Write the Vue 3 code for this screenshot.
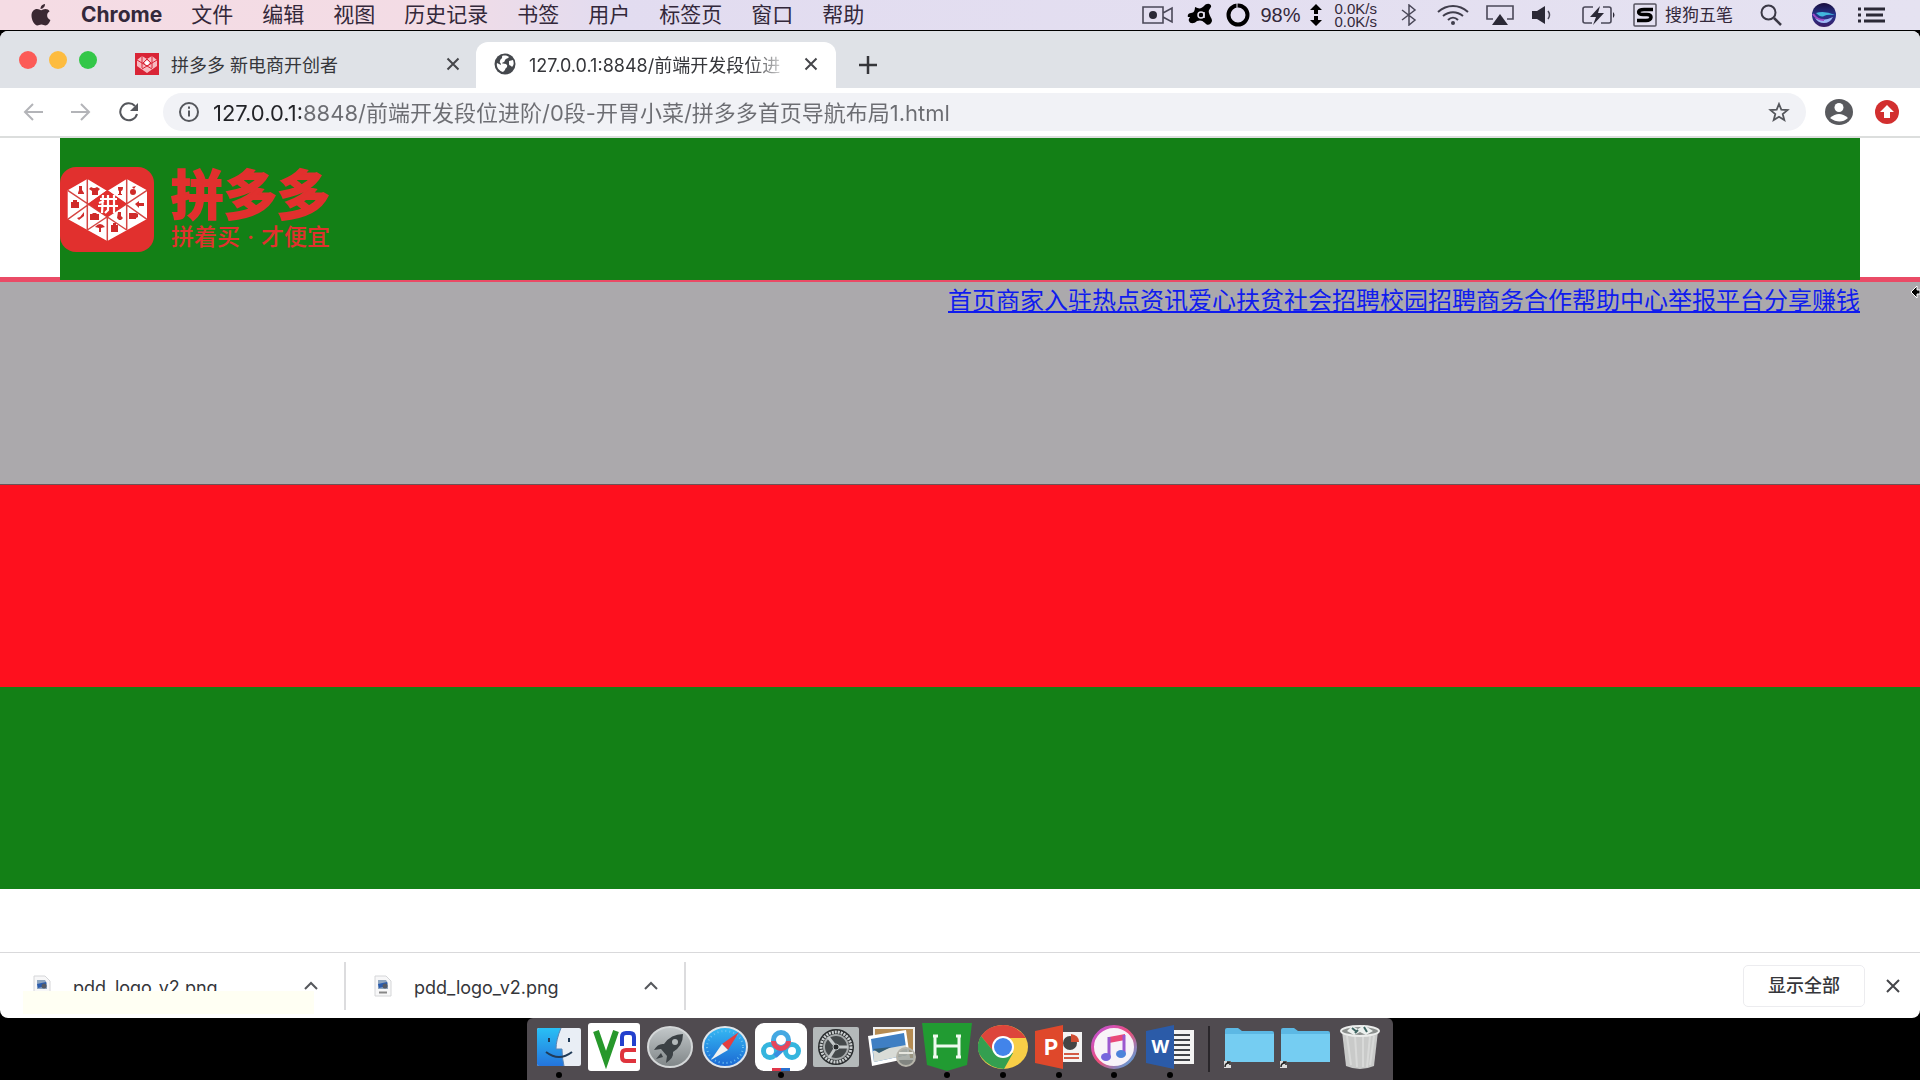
<script setup>
import { ref } from 'vue'

const menus = ['文件', '编辑', '视图', '历史记录', '书签', '用户', '标签页', '窗口', '帮助']
const links = ['首页', '商家入驻', '热点资讯', '爱心扶贫', '社会招聘', '校园招聘', '商务合作', '帮助中心', '举报平台', '分享赚钱']
const downloads = [
  { id: 1, name: 'pdd_logo_v2.png', fading: true },
  { id: 2, name: 'pdd_logo_v2.png', fading: false }
]
const url = ref('127.0.0.1:8848/前端开发段位进阶/0段-开胃小菜/拼多多首页导航布局1.html')
</script>

<template>
  <div class="desktop">
    <header class="menubar">
      <nav class="menus">
        <button class="apple" aria-label="Apple">
          <svg width="22" height="24" viewBox="0 0 22 24"><path d="M15 1c.2 2.5-2 5-4.4 4.9C10.3 3.5 12.5 1.2 15 1zM11.200 7.200c1 0 2.300-1.200 4.300-1.200 1.600 0 3.200.9 4.100 2.300-3.700 2.200-3 7.300.8 8.700-.9 2.700-2.900 5.500-4.900 5.500-1.600 0-2.200-1-4.100-1s-2.600 1-4 1C4.500 22.500 1.500 17 1.500 12.800 1.500 8.500 4.200 6.100 7 6.100c1.800 0 3.200 1.100 4.200 1.100z" /></svg>
        </button>
        <button class="app-name">Chrome</button>
        <button v-for="menu in menus" :key="menu">{{ menu }}</button>
      </nav>
      <div class="status">
        <svg class="camera" width="32" height="20" viewBox="0 0 32 20" fill="none" stroke="#4a4858" stroke-width="1.6"><path d="M1 2h20v16H1zM21 8l9-5v14l-9-5" /><circle cx="11" cy="10" r="4" fill="#2b2936" stroke="none" /></svg>
        <svg class="avast" width="26" height="24" viewBox="0 0 26 24"><path d="M8 4c4 2 6 2 9-1 3-4 8-2 7 1-1 2-3 3-2 6 1 4 3 5 3 8-1 4-5 5-7 2-3-3-5-3-8-2-3 3-7 3-8 0-1-2 1-3 1-4H1c-1-2 1-4 3-4 3 0 4-3 4-6z" /><circle cx="14" cy="12" r="3" fill="none" stroke="#e5e1ef" stroke-width="1.5" /><path d="M17 9v6" stroke="#e5e1ef" stroke-width="1.5" /></svg>
        <svg class="ring" width="24" height="24" viewBox="0 0 24 24"><circle cx="12" cy="12" r="9.5" fill="none" stroke="#000" stroke-width="4" /><path d="M11 0v5" stroke="#e5e1ef" /></svg>
        <span class="percent">98%</span>
        <svg class="updown" width="12" height="24" viewBox="0 0 12 24"><path d="M6 1l6 6H8v4H4V7H0zM6 23l6-6H8v-4H4v4H0z" /></svg>
        <span class="speed"><span>0.0K/s</span><span>0.0K/s</span></span>
        <svg class="bluetooth" width="16" height="22" viewBox="0 0 16 22" fill="none" stroke="#4a4858" stroke-width="1.5"><path d="M1 6l13 10-6 5V1l6 5L1 16" /></svg>
        <svg class="wifi" width="32" height="22" viewBox="0 0 32 22" fill="none" stroke="#3f3d4b" stroke-width="2"><path d="M1 8c9-8 21-8 30 0M6 12c6-5 14-5 20 0M11 16c3-3 7-3 10 0" /><circle cx="16" cy="19" r="2" fill="#3f3d4b" stroke="none" /></svg>
        <svg class="airplay" width="30" height="22" viewBox="0 0 30 22"><path d="M8 15H2V2h26v13h-6" fill="none" stroke="#4a4858" stroke-width="1.6" /><path d="M15 10l8 11H7z" fill="#2b2936" /></svg>
        <svg class="volume" width="22" height="20" viewBox="0 0 22 20"><path d="M1 6h5l8-5v18l-8-5H1z" fill="#2b2936" /><path d="M17 6q3 4 0 8" fill="none" stroke="#4a4858" stroke-width="1.5" /></svg>
        <svg class="battery" width="36" height="20" viewBox="0 0 36 20"><path d="M12 2H4Q2 2 2 4v12q0 2 2 2h7M22 2h6q2 0 2 2v12q0 2-2 2h-8" fill="none" stroke="#4a4858" stroke-width="1.6" /><path d="M19 1L9 12h6l-3 8 11-12h-6zM32 7q3 3 0 6z" fill="#2b2936" /></svg>
        <svg class="sogou" width="24" height="24" viewBox="0 0 24 24"><rect x="1" y="1" width="22" height="22" rx="1" fill="none" stroke="#55535f" stroke-width="1.5" /><path d="M20 6.500h-9c-7 0-7 5-1 5h4c6 0 5 6-1 6H4" fill="none" stroke="#000" stroke-width="3.500" /></svg>
        <span class="ime">搜狗五笔</span>
        <svg class="search" width="22" height="22" viewBox="0 0 22 22" fill="none" stroke="#3a3845" stroke-width="2"><circle cx="8.5" cy="8.5" r="7" /><path d="M14 14l7 7" stroke-width="2.5" /></svg>
        <svg class="siri" width="24" height="24" viewBox="0 0 24 24"><defs><linearGradient id="siri" x2="0" y2="1"><stop stop-color="#190d3d" /><stop offset=".5" stop-color="#26358f" /><stop offset="1" stop-color="#3a1c65" /></linearGradient></defs><circle cx="12" cy="12" r="12" fill="url(#siri)" /><path d="M4 10q8-3 19 2-8-1-11 1t-8-3z" fill="#42b6dd" /><path d="M3 15q8 4 18-1-3 6-9 6t-9-5z" fill="#9eb8f5" /><path d="M1 11q4 6 11 6" fill="none" stroke="#a04bc8" stroke-width="2" /></svg>
        <svg class="list" width="28" height="16" viewBox="0 0 28 16" stroke="#2b2936" stroke-width="3"><path d="M0 2h3M6 2h21M0 8h3M8 8h17M0 14h3M6 14h21" /></svg>
      </div>
    </header>

    <main class="window">
      <div class="tabstrip">
        <div class="lights"><i class="red"></i><i class="yellow"></i><i class="green"></i></div>
        <div class="tab">
          <svg width="24" height="22" viewBox="0 0 24 22"><path d="M0 0h24v22H0z" fill="#d92436" /><path d="M7 3l5 3 5-3 5 4v6l-10 7L2 13V7z" fill="#f7b9c0" /><path d="M2 7l15 9M22 7L7 16M7 3v12M17 3v12M8 10l4-4 4 4-4 3z" stroke="#d92436" fill="none" /><circle cx="12" cy="10" r="2" fill="#fff" /></svg>
          <span class="title">拼多多 新电商开创者</span>
          <button class="close" aria-label="关闭"><svg width="14" height="14" viewBox="0 0 14 14"><path d="M1.500 1.500l11 11M12.500 1.500l-11 11" /></svg></button>
        </div>
        <div class="tab active">
          <svg width="22" height="22" viewBox="0 0 22 22"><circle cx="11" cy="11" r="10.5" fill="#45484d" /><path d="M8 3c3-1 6 0 7 1-1 2-3 1-4 3 0 2-2 2-3 3 0 1 4 0 5 2 1 3-2 3-2 5l-2 2c-4-1-7-5-6-9l4 2c0-3-2-2-1-4 0-2 3-2 2-5zM15 8l4-1c1 3 1 5-1 7-1-2-3-1-3-3z" fill="#fff" /></svg>
          <span class="title">127.0.0.1:8848/前端开发段位进</span>
          <button class="close" aria-label="关闭"><svg width="14" height="14" viewBox="0 0 14 14"><path d="M1.500 1.500l11 11M12.500 1.500l-11 11" /></svg></button>
        </div>
        <button class="new-tab" aria-label="新标签页"><svg width="18" height="18" viewBox="0 0 18 18"><path d="M9 0v18M0 9h18" stroke="#35363a" stroke-width="2.5" /></svg></button>
      </div>

      <div class="toolbar">
        <button class="tool" aria-label="后退"><svg width="20" height="18" viewBox="0 0 20 18" stroke="#b3b4b8"><path d="M20 9H2M10 1L2 9l8 8" /></svg></button>
        <button class="tool" aria-label="前进"><svg width="20" height="18" viewBox="0 0 20 18" stroke="#b3b4b8"><path d="M0 9h18M10 1l8 8-8 8" /></svg></button>
        <button class="tool" aria-label="刷新"><svg width="22" height="20" viewBox="0 0 22 20" stroke="#55575c"><path d="M17 4a8.500 8.500 0 1 0 2 8" /><path d="M20 1v8h-8z" fill="#55575c" stroke="none" /></svg></button>
        <div class="omnibox">
          <svg width="22" height="22" viewBox="0 0 22 22"><circle cx="11" cy="11" r="9" fill="none" stroke="#55575c" stroke-width="2" /><path d="M11 9.500v6M11 5.500v2.200" stroke="#55575c" stroke-width="2" /></svg>
          <input v-model="url" type="text" aria-label="地址" spellcheck="false" />
          <button aria-label="收藏"><svg width="22" height="20" viewBox="0 0 22 20"><path d="M11 2l2.300 5.700 6.200.4-4.800 3.900 1.600 6-5.300-3.300L5.700 18l1.600-6-4.800-3.900 6.200-.4z" fill="none" stroke="#55575c" stroke-width="1.8" /></svg></button>
        </div>
        <button class="avatar" aria-label="用户"><svg width="28" height="26" viewBox="0 0 28 26"><ellipse cx="14" cy="13" rx="14" ry="13" fill="#595a5e" /><circle cx="14" cy="8.5" r="4.5" fill="#fff" /><path d="M5 19q9-8 18 0-8 7-18 0z" fill="#fff" /></svg></button>
        <button class="update" aria-label="更新"><svg width="24" height="24" viewBox="0 0 24 24"><circle cx="12" cy="12" r="12" fill="#d22f2f" /><path d="M12 5l7 7h-4v6H9v-6H5z" fill="#fff" /></svg></button>
      </div>

      <section class="page">
        <div class="site-header">
          <div class="container">
            <svg class="logo" width="94" height="85" viewBox="0 0 94 85">
              <rect width="94" height="85" rx="16" fill="#e1302e" />
              <path d="M27.300 12L47.300 24 66.700 12 87 23.300V52L47.300 74 7.700 52V23.300z" fill="#fff" />
              <path d="M27.300 12v51M66.700 12v51M47.300 50v24M7.700 23.300l59 39.700M7.700 52.300L47.300 24M87 23.300L27.300 63M87 52.300L47.300 24" stroke="#d54643" stroke-width="1.5" />
              <path d="M47.300 23L67 36.700 47.300 50 28 36.700z" fill="#e1302e" />
              <path d="M40 32h17M38 39h20M43 28l-1 18M48 28v15l-3 3M54 28v18M39 36l5-2" stroke="#fff" stroke-width="2.2" fill="none" />
              <g fill="#cf2b2a">
                <path d="M19 19h3v4l2 3v1h-6v-1l1-3zM31 20l2 1h2l2-1 3 2-2 2v4h-6v-4l-3-2zM58 20h5q0 4-2 4v3h1v1h-4v-1h1v-3q-1 0-1-4z" />
                <circle cx="73" cy="25" r="3" /><path d="M72 20l4-1-2 3z" />
                <path d="M11 35h2v-2h4v2h2v6h-8zM75 37l4-3v2h5v3h-5v2zM17 51l3-1 4-5v4l-5 4zM30 47h2l1-1h3l1 1h2v6h-9zM58 45h3v4l2 2-2 2h-2l-2-2zM69 46h7l2 1v3l-2 1v1h-7zM35 60q5-6 10 0l-4 1v4h-2v-4zM51 58h2v-2h3v2h2v7h-7z" />
              </g>
            </svg>
            <div class="brand">
              <strong>拼多多</strong>
              <p><span>拼着买</span><span>·</span><span>才便宜</span></p>
            </div>
          </div>
        </div>
        <div class="band gray">
          <nav class="links"><a v-for="link in links" :key="link" href="#">{{ link }}</a></nav>
        </div>
        <div class="band crimson"></div>
        <div class="band leaf"></div>
        <svg class="cursor" width="10" height="16" viewBox="0 0 10 16"><path d="M1 8l6-6v4h3v4H7v4z" stroke="#fff" /></svg>
      </section>

      <footer class="shelf">
        <div v-for="file in downloads" :key="file.id" class="download" :class="{ fading: file.fading }">
          <svg width="18" height="22" viewBox="0 0 18 22"><path d="M1 1h11l5 5v15H1z" fill="#f7f7f8" stroke="#d5d6d8" /><path d="M4 5h8l2 3v6H4z" fill="#8ea5bf" /><path d="M4 9l9-2v4l-8 2z" fill="#2a5cae" /><circle cx="11" cy="11" r="2.5" fill="#555b66" /><path d="M5 17.500h8" stroke="#888" stroke-width="2" /></svg>
          <span>{{ file.name }}</span>
          <button aria-label="选项"><svg width="14" height="10" viewBox="0 0 14 10"><path d="M1 8l6-6 6 6" fill="none" stroke="#55575c" stroke-width="2" /></svg></button>
        </div>
        <button class="show-all">显示全部</button>
        <button class="close" aria-label="关闭"><svg width="14" height="14" viewBox="0 0 14 14"><path d="M1 1l12 12M13 1L1 13" /></svg></button>
      </footer>
    </main>

    <div class="dock">
      <div class="app running">
        <svg width="44" height="48" viewBox="0 0 44 48"><defs><linearGradient id="finder" x2="0" y2="1"><stop stop-color="#29c0f5" /><stop offset="1" stop-color="#2474dc" /></linearGradient></defs><rect y="5" width="44" height="38" rx="2" fill="#e9eef5" /><path d="M2 5h22q-5 12-5 21h6q0 9 2 17H2q-2 0-2-2V7q0-2 2-2z" fill="url(#finder)" /><path d="M24 5q-5 12-5 21h6q0 9 2 17" fill="none" stroke="#5b86b5" /><path d="M12 15v4M32 15v4M9 29q13 10 26 0" fill="none" stroke="#213b58" stroke-width="2" /></svg>
      </div>
      <div class="app">
        <svg width="52" height="48" viewBox="0 0 52 48"><rect width="52" height="48" rx="3" fill="#fff" /><path d="M8 8l10 29L28 8" fill="none" stroke="#27982b" stroke-width="6" /><path d="M34 23V14q0-4 4-4h4q4 0 4 4v9" fill="none" stroke="#2340cd" stroke-width="4" /><path d="M48 27H38q-4 0-4 4v3q0 4 4 4h10" fill="none" stroke="#df343d" stroke-width="4" /></svg>
      </div>
      <div class="app">
        <svg width="46" height="44" viewBox="0 0 46 44"><defs><linearGradient id="metal" x2="0" y2="1"><stop stop-color="#c3c8ca" /><stop offset="1" stop-color="#7f8587" /></linearGradient></defs><ellipse cx="23" cy="22" rx="22" ry="20" fill="url(#metal)" stroke="#d4d7d8" stroke-width="2" /><path d="M36 9q-12 0-19 10-6-1-10 6l7-1 6 7-1 7q8-5 7-11Q36 21 36 9z" fill="#3b4145" /><circle cx="28" cy="17" r="3" fill="#b2b8ba" /><path d="M14 28l-5 6 7-2z" fill="#3b4145" /></svg>
      </div>
      <div class="app">
        <svg width="46" height="44" viewBox="0 0 46 44"><defs><linearGradient id="safari" x2="0" y2="1"><stop stop-color="#35baf4" /><stop offset="1" stop-color="#1b67d2" /></linearGradient></defs><ellipse cx="23" cy="22" rx="22" ry="20" fill="url(#safari)" stroke="#dfe5ea" stroke-width="2" /><ellipse cx="23" cy="22" rx="18" ry="16" fill="none" stroke="#6cc0f0" stroke-width="2" stroke-dasharray="1 3" /><path d="M37 7L20 19l6 6z" fill="#e43e3f" /><path d="M9 35l11-16 6 6z" fill="#f1f1f1" /></svg>
      </div>
      <div class="app running">
        <svg width="52" height="48" viewBox="0 0 52 48"><rect width="52" height="48" rx="9" fill="#fff" /><g fill="none" stroke-width="5"><circle cx="15" cy="28" r="6.5" stroke="#35b5de" /><circle cx="37" cy="28" r="6.5" stroke="#35b5de" /><path d="M20 33l12-11" stroke="#398ee0" /><circle cx="26" cy="17" r="7.5" stroke="#44a8e2" /><path d="M18.500 18a7.500 7.500 0 0 0 15 0" stroke="#e5475d" /></g><path d="M17 45h9v3h-9z" fill="#df3649" /><path d="M26 45h9v3h-9z" fill="#2a70ce" /></svg>
      </div>
      <div class="app">
        <svg width="46" height="40" viewBox="0 0 46 40"><rect width="46" height="40" rx="2" fill="#b4b9ba" /><circle cx="23" cy="20" r="18" fill="#292c2e" /><circle cx="23" cy="20" r="15" fill="none" stroke="#cbcfd0" stroke-width="3" stroke-dasharray="2 1" /><circle cx="23" cy="20" r="12" fill="#45494b" stroke="#a6aaab" stroke-width="2" /><path d="M23 20L15 10M23 20h12M23 20l-7 11" stroke="#c3c7c8" stroke-width="3" /><circle cx="23" cy="20" r="3" fill="#27292b" stroke="#b8bcbd" /></svg>
      </div>
      <div class="app">
        <svg width="50" height="44" viewBox="0 0 50 44"><path d="M7 3h40v31H7z" fill="#b58b52" stroke="#eee" stroke-width="2" /><path d="M1 11l38-6 4 28-38 8z" fill="#fff" /><path d="M4 14l33-6 3 22-33 7z" fill="#3f7fc3" /><path d="M6 26l33-6 1 10-33 7z" fill="#d9dcd7" /><path d="M6 24l18-2-12 6z" fill="#345d73" /><circle cx="39" cy="32" r="9" fill="#939891" fill-opacity=".75" stroke="#b6b4aa" stroke-width="2" /><path d="M32 28h14" stroke="#e6e6df" stroke-width="2" /></svg>
      </div>
      <div class="app running">
        <svg width="50" height="48" viewBox="0 0 50 48"><path d="M0 0h50l-5 42-20 6-20-6z" fill="#219b32" /><path d="M13 12v22M37 12v22M13 23h24M11 13h5M11 34h5M34 13h5M34 34h5" stroke="#effaf0" stroke-width="3" /></svg>
      </div>
      <div class="app running">
        <svg width="50" height="46" viewBox="0 0 50 46"><ellipse cx="25" cy="23" rx="25" ry="22" fill="#f8ce47" /><path d="M3 12Q11 1 25 1t23 13H25L15 27z" fill="#dd453b" /><path d="M3 12Q-4 25 4 34q8 10 22 11l9-16-19-1z" fill="#349f50" /><circle cx="25" cy="23" r="11" fill="#fff" /><circle cx="25" cy="23" r="9" fill="#4284ea" /></svg>
      </div>
      <div class="app running">
        <svg width="48" height="44" viewBox="0 0 48 44"><path d="M25 7h22v30H25z" fill="#f3f3f3" /><circle cx="35" cy="18" r="7" fill="#444" /><path d="M36 9q8 1 8 8h-8z" fill="#d04c31" /><path d="M29 29h15M29 33h15" stroke="#d25a45" stroke-width="2" /><path d="M0 6l28-6v44L0 38z" fill="#df482b" /><text x="9" y="30" font-size="22" font-weight="700" fill="#fff">P</text></svg>
      </div>
      <div class="app running">
        <svg width="46" height="44" viewBox="0 0 46 44"><defs><linearGradient id="music" x2="1" y2="1"><stop stop-color="#bb52e2" /><stop offset=".5" stop-color="#ef4e78" /><stop offset="1" stop-color="#3dafee" /></linearGradient></defs><ellipse cx="23" cy="22" rx="21.5" ry="20.5" fill="#f8f3f8" stroke="url(#music)" stroke-width="3" /><path d="M18 12l16-3v6l-16 3z" fill="#e94978" /><path d="M18 12v20M33 10v19" stroke="#9c59cf" stroke-width="3" /><ellipse cx="15" cy="32" rx="5" ry="4" fill="#7766dd" /><ellipse cx="30" cy="29" rx="5" ry="4" fill="#4d83da" /></svg>
      </div>
      <div class="app running">
        <svg width="48" height="44" viewBox="0 0 48 44"><path d="M25 5h23v34H25z" fill="#f3f3f3" /><path d="M28 10h16M28 15h16M28 20h16M28 25h16M28 30h16M28 35h16" stroke="#404348" stroke-width="2" /><path d="M0 6l28-6v44L0 38z" fill="#2b5ba8" /><text x="5" y="28" font-size="18" font-weight="700" fill="#fff">W</text></svg>
      </div>
      <div class="divider"></div>
      <div v-for="n in 2" :key="n" class="app">
        <svg width="50" height="42" viewBox="0 0 50 42"><path d="M1 4q0-2 2-2h11l4 3h30q2 0 2 2v29H1z" fill="#5cb8e4" /><path d="M1 8h49v28H1z" fill="#75cdf2" /><path d="M0 35h7v7H0z" fill="#ddd" /><path d="M1 41q0-4 4-4m-2-1h3v3" stroke="#222" stroke-width="1.5" fill="none" /></svg>
      </div>
      <div class="app">
        <svg width="40" height="46" viewBox="0 0 40 46"><path d="M2 7h36l-4 35q-14 6-28 0z" fill="#c9cac9" /><path d="M7 12l4 29M15 12l2 31M23 12v31M30 12l-3 31M34 12l-4 29" stroke="#d8d9d8" stroke-width="2" /><ellipse cx="20" cy="7" rx="19" ry="5" fill="#8c908e" stroke="#ecedec" stroke-width="2" /><path d="M7 7l5-5 6 3 6-4 9 6-7 4-6-3-6 3z" fill="#edf1ef" /><path d="M12 4l5 4M24 3l3 5M15 9l3-3" stroke="#3f6663" stroke-width="2" /></svg>
      </div>
    </div>
  </div>
</template>

<style>
body {
  margin: 0;
  background: #000;
}
</style>

<style scoped>
.desktop {
  display: flex;
  flex-direction: column;
  min-height: 100vh;
  background: #000;
  color: #35363a;
  font-family: Inter, "Noto Sans CJK SC", sans-serif;
}

button {
  padding: 0;
  border: 0;
  background: none;
  color: inherit;
  font: inherit;
}

svg {
  display: block;
  flex: none;
}

.menubar {
  display: flex;
  justify-content: space-between;
  align-items: center;
  height: 30px;
  margin-bottom: 1px;
  background: linear-gradient(to right, #f5dce4, #f3dce5 22%, #e2dcf0 32%, #e5e2f1);
  color: #33283a;
}

.menus {
  display: flex;
  align-items: center;
  gap: 29px;
  padding-left: 30px;
  font-size: 21px;
  line-height: 28px;
}

.apple {
  fill: #3a2832;
}

.app-name {
  font-weight: 700;
}

.status {
  display: flex;
  align-items: center;
  gap: 16px;
  padding-right: 34px;
}

.camera,
.avast {
  margin-right: -3px;
}

.percent {
  margin: 0 -6px;
  font-family: "Liberation Sans", sans-serif;
  font-size: 20px;
}

.speed {
  display: flex;
  flex-direction: column;
  margin: 0 8px 0 -4px;
  font-family: "Liberation Sans", sans-serif;
  font-size: 15px;
  line-height: 13px;
}

.bluetooth {
  margin-right: 4px;
}

.battery {
  margin-left: 12px;
}

.ime {
  margin-left: -8px;
  font-size: 17px;
  line-height: 24px;
}

.search {
  margin: 0 14px 0 11px;
}

.siri {
  margin-right: 6px;
}

.window {
  display: flex;
  flex: 1;
  flex-direction: column;
  overflow: hidden;
  border-radius: 8px;
  background: #fff;
}

.tabstrip {
  display: flex;
  align-items: flex-end;
  height: 57px;
  background: #dfe2e7;
}

.lights {
  display: flex;
  align-self: center;
  gap: 12px;
  padding: 0 27px 0 19px;
}

.lights i {
  width: 18px;
  height: 18px;
  border-radius: 50%;
}

.lights .red {
  background: #fc5b57;
}

.lights .yellow {
  background: #fdbc40;
}

.lights .green {
  background: #33c748;
}

.tab {
  display: flex;
  align-items: center;
  box-sizing: border-box;
  width: 352px;
  height: 46px;
  padding: 0 16px 2px 11px;
  font-size: 18px;
}

.tab .title {
  flex: 1;
  margin: 0 14px 0 12px;
  overflow: hidden;
  white-space: nowrap;
}

.tab.active {
  width: 360px;
  padding-right: 18px;
  padding-left: 18px;
  border-radius: 12px 12px 0 0;
  background: #fff;
}

.tab.active .title {
  margin-left: 13px;
  mask-image: linear-gradient(to right, #000 85%, transparent);
}

.close svg {
  fill: none;
  stroke: #45464a;
  stroke-width: 2;
}

.new-tab {
  margin: 0 23px 14px;
}

.toolbar {
  display: flex;
  align-items: center;
  height: 48px;
  padding: 0 21px 0 9px;
  border-bottom: 2px solid #dcdedd;
}

.tool {
  display: flex;
  justify-content: center;
  width: 48px;
}

.tool svg {
  fill: none;
  stroke-width: 2;
}

.omnibox {
  display: flex;
  flex: 1;
  align-items: center;
  height: 38px;
  margin: 0 19px 0 10px;
  padding: 0 16px 0 15px;
  border-radius: 19px;
  background: #f1f2f6;
}

.omnibox input {
  flex: 1;
  min-width: 0;
  margin-left: 13px;
  padding: 0 0 2px;
  border: 0;
  outline: 0;
  background: linear-gradient(to right, #222327 88px, #6c6d72 88px);
  background-clip: text;
  color: transparent;
  font: inherit;
  font-size: 22px;
}

.update {
  margin-left: 22px;
}

.page {
  position: relative;
  flex: 1;
}

.site-header {
  height: 139px;
  border-bottom: 5px solid #ea4b66;
}

.container {
  display: flex;
  align-items: center;
  box-sizing: border-box;
  height: 142px;
  margin: 0 60px;
  background: #138016;
}

.brand {
  margin-left: 17px;
  color: #e1302e;
}

.brand strong {
  display: block;
  font-size: 53px;
  font-weight: 700;
  line-height: 56px;
  -webkit-text-stroke: 2px #e1302e;
}

.brand p {
  display: flex;
  justify-content: space-between;
  margin: 0;
  font-size: 23px;
  font-weight: 500;
  line-height: 26px;
}

.band {
  height: 202px;
}

.gray {
  box-sizing: border-box;
  height: 203px;
  border-bottom: 1px solid #6b5357;
  background: #aba9ac;
}

.crimson {
  background: #fe101e;
}

.leaf {
  background: #138016;
}

.links {
  display: flex;
  justify-content: flex-end;
  padding: 1px 60px 0 0;
  font-size: 24px;
  line-height: 36px;
}

.links a {
  color: #101cee;
}

.cursor {
  position: absolute;
  top: 146px;
  right: 0;
}

.shelf {
  display: flex;
  align-items: center;
  height: 65px;
  padding-right: 20px;
  border-top: 1px solid #d9d9db;
}

.download {
  display: flex;
  align-items: center;
  box-sizing: border-box;
  width: 340px;
  height: 48px;
  padding: 0 26px 0 28px;
  border-right: 2px solid #dcdcde;
  font-size: 18px;
}

.download:first-child {
  width: 346px;
  padding-left: 33px;
}

.download span {
  flex: 1;
  padding-top: 4px;
  margin-left: 22px;
}

.fading {
  position: relative;
}

.fading::after {
  position: absolute;
  right: 30px;
  bottom: -4px;
  left: 23px;
  height: 23px;
  background: #fffff3;
  content: "";
}

.show-all {
  width: 122px;
  height: 42px;
  margin: 0 21px 0 auto;
  padding-bottom: 4px;
  border: 1px solid #ececef;
  border-radius: 5px;
  font-size: 18px;
  font-weight: 500;
}

.dock {
  display: grid;
  grid-template-columns: repeat(12, 1fr) 24px repeat(3, 1fr);
  align-self: center;
  box-sizing: border-box;
  width: 866px;
  max-width: 100%;
  height: 62px;
  padding: 3px 5px 0 4px;
  border-radius: 6px 6px 0 0;
  background: #504b50;
}

.app {
  display: grid;
  grid-template-rows: 51px 6px;
  align-items: center;
  align-content: start;
  justify-items: center;
}

.running::after {
  width: 6px;
  height: 6px;
  border-radius: 50%;
  background: #000;
  content: "";
}

.divider {
  justify-self: center;
  width: 2px;
  height: 46px;
  margin-top: 5px;
  background: #29262a;
}
</style>
